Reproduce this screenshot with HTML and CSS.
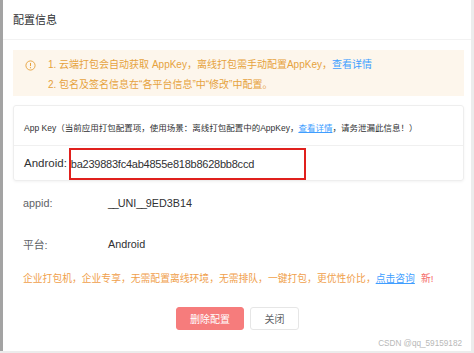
FILE: index.html
```html
<!DOCTYPE html>
<html lang="zh">
<head>
<meta charset="utf-8">
<link rel="stylesheet" href="styles.css">
</head>
<body>
<div class="frame">
  <div class="strip-left"></div>
  <div class="dialog">
    <div class="header">配置信息</div>
    <div class="alert">
      <svg class="alert-icon" width="11" height="11" viewBox="0 0 12 12"><circle cx="6" cy="6" r="5" fill="none" stroke="#e6a23c" stroke-width="1"/><line x1="6" y1="3.2" x2="6" y2="6.6" stroke="#e6a23c" stroke-width="1.1"/><circle cx="6" cy="8.4" r="0.65" fill="#e6a23c"/></svg>
      <div class="alert-text">
        <div>1. 云端打包会自动获取 AppKey，离线打包需手动配置AppKey，<span class="blue">查看详情</span></div>
        <div>2. 包名及签名信息在“各平台信息”中“修改”中配置。</div>
      </div>
    </div>
    <div class="card">
      <div class="card-row card-head">App Key（当前应用打包配置项，使用场景：离线打包配置中的AppKey，<span class="link">查看详情</span>，请务泄漏此信息！）</div>
      <div class="card-row card-key">
        <span class="key-label">Android:</span>
        <span class="key-box">ba239883fc4ab4855e818b8628bb8ccd</span>
      </div>
    </div>
    <div class="info-row info-appid"><span class="info-label">appid:</span><span class="info-value"><span class="us">__</span>UNI<span class="us">__</span>9ED3B14</span></div>
    <div class="info-row info-platform"><span class="info-label">平台:</span><span class="info-value">Android</span></div>
    <div class="promo">企业打包机，企业专享，无需配置离线环境，无需排队，一键打包，更优性价比，<span class="link">点击咨询</span><span class="new">新!</span></div>
    <div class="buttons">
      <button class="btn btn-danger">删除配置</button>
      <button class="btn btn-plain">关闭</button>
    </div>
    <div class="watermark">CSDN @qq_59159182</div>
  </div>
  <div class="strip-right"></div>
</div>
</body>
</html>
```
FILE: styles.css
```css
* { box-sizing: border-box; }
html, body { margin: 0; padding: 0; background: #fff; }
body {
  font-family: "Liberation Sans", "Noto Sans CJK SC", sans-serif;
  color: #303133;
}
.frame {
  display: flex;
  width: 474px;
  height: 353px;
  border-bottom: 2px solid #ececec;
  overflow: hidden;
}
.strip-left { width: 3px; background: #a3a3a3; flex: none; }
.strip-right { width: 3px; background: #ececec; flex: none; }
.dialog {
  flex: 1;
  min-width: 0;
  padding: 0 7px 0 10px;
  display: flex;
  flex-direction: column;
}
.header {
  height: 40px;
  line-height: 40px;
  font-size: 11px;
  color: #303133;
  border-bottom: 1px solid #f2f2f2;
  margin: 0 -7px 0 -10px;
  padding-left: 10px;
  flex: none;
}
.alert {
  margin-top: 10px;
  height: 46px;
  flex: none;
  background: #fdf6ec;
  display: flex;
  align-items: flex-start;
  padding: 9px 0 0 12px;
  color: #e6a23c;
  font-size: 10px;
}
.alert-icon { margin-top: 1px; flex: none; }
.alert-text { margin-left: 12px; line-height: 20px; margin-top: -4px; white-space: nowrap; }
.blue { color: #409eff; }
.link { color: #409eff; text-decoration: underline; }
.card {
  margin-top: 9px;
  border: 1px solid #eeeeee;
  border-radius: 3px;
  box-shadow: 0 1px 3px rgba(0,0,0,0.05);
  height: 76px;
  flex: none;
}
.card-row { padding-left: 10px; display: flex; align-items: center; }
.card-head {
  height: 40px;
  padding-top: 3px;
  font-size: 8.5px;
  color: #303133;
  border-bottom: 1px solid #f0f0f0;
  white-space: nowrap;
}
.card-key { height: 34px; align-items: flex-end; }
.key-label { align-self: center; font-size: 11.5px; flex: none; }
.key-box {
  flex: none;
  margin-left: 2px;
  width: 237px;
  height: 32px;
  border: 2px solid #e0201d;
  display: flex;
  align-items: center;
  padding-left: 0;
  font-size: 11px;
  letter-spacing: -0.24px;
  white-space: nowrap;
}
.info-row {
  height: 40px;
  flex: none;
  display: flex;
  align-items: center;
  font-size: 10.8px;
  padding-left: 10px;
}
.info-appid { margin-top: 2px; }
.info-platform { margin-top: 1px; }
.info-label { width: 85px; color: #606266; flex: none; }
.info-value { color: #303133; white-space: nowrap; }
.us { letter-spacing: -1.2px; }
.promo {
  margin-top: 5px;
  height: 20px;
  flex: none;
  line-height: 20px;
  padding-left: 10px;
  font-size: 9.8px;
  color: #f0a04b;
  white-space: nowrap;
}
.promo .new { color: #f56c6c; margin-left: 6px; }
.buttons {
  margin-top: 18px;
  flex: none;
  display: flex;
  justify-content: center;
  gap: 6px;
  padding-right: 2px;
}
.btn {
  height: 23px;
  font-family: inherit;
  font-size: 10px;
  border-radius: 3px;
  padding: 0;
  cursor: pointer;
}
.btn-danger {
  width: 68px;
  background: #f67c7c;
  border: 1px solid #f67c7c;
  color: #fff;
}
.btn-plain {
  width: 49px;
  background: #fff;
  border: 1px solid #e6e6e6;
  color: #606266;
}
.watermark {
  margin-top: 9px;
  flex: none;
  text-align: right;
  font-size: 8.2px;
  color: #b8b8b8;
  padding-right: 2px;
}
```
